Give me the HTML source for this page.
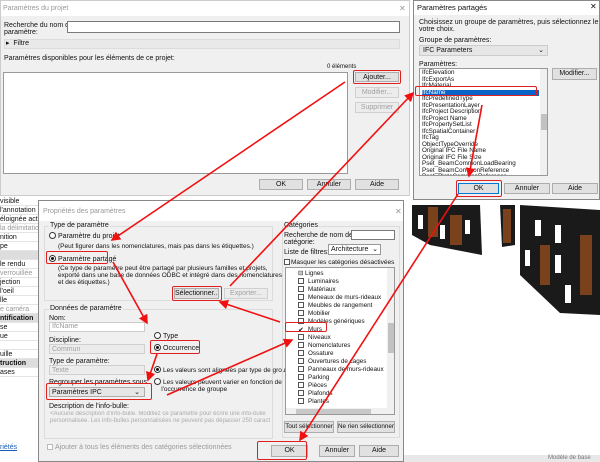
<!DOCTYPE html>
<html><head><meta charset="utf-8"><style>
*{margin:0;padding:0;box-sizing:border-box}
body{width:600px;height:462px;overflow:hidden;background:#fff;font-family:"Liberation Sans",sans-serif;font-size:7px;color:#111;position:relative}
.a{position:absolute;white-space:nowrap}
.dlg{position:absolute;background:#f0f0f0;border:1px solid #aaa;overflow:hidden}
.btn{position:absolute;background:#e1e1e1;border:1px solid #adadad;text-align:center;font-size:7px;line-height:10px;white-space:nowrap;overflow:hidden}
.dis{color:#a0a0a0;background:#ececec;border-color:#d0d0d0}
.in{position:absolute;background:#fff;border:1px solid #7a7a7a}
.red{position:absolute;border:1.5px solid #e02020;border-radius:2px}
.grp{position:absolute;border:1px solid #dcdcdc}
.rad{display:inline-block;width:7px;height:7px;border:1px solid #333;border-radius:50%;background:#fff;vertical-align:-1px;margin-right:2px;position:relative}
.rad.on::after{content:"";position:absolute;left:1px;top:1px;width:3px;height:3px;border-radius:50%;background:#111}
.cb{display:inline-block;width:6px;height:6px;border:1px solid #555;background:#fff;vertical-align:-1px;margin-right:4px}
.row{position:absolute;left:0;width:40px;height:9px;font-size:7px;line-height:9px;border-bottom:1px solid #e4e4e4;overflow:hidden;white-space:nowrap}
.li div{height:6.5px;line-height:6.5px;white-space:nowrap}
.cl div{height:8px;line-height:8px;white-space:nowrap}
</style></head><body>

<!-- building background -->
<svg class="a" style="left:400px;top:195px" width="200" height="130">
<g fill="#1a1a1a">
<polygon points="12,10 80,10 82,60 30,50 12,40"/>
<polygon points="100,10 115,10 115,50 102,52"/>
<polygon points="120,10 200,15 200,120 160,118 120,80"/>
</g>
<g fill="#8a4a1e" opacity=".85">
<rect x="28" y="12" width="10" height="30"/><rect x="50" y="20" width="12" height="30"/>
<rect x="103" y="14" width="8" height="34"/><rect x="140" y="50" width="10" height="40"/><rect x="180" y="40" width="12" height="60"/>
</g>
<g fill="#fff"><rect x="18" y="20" width="5" height="14"/><rect x="65" y="25" width="5" height="14"/><rect x="135" y="25" width="6" height="16"/><rect x="155" y="30" width="6" height="18"/><rect x="155" y="60" width="6" height="18"/><rect x="165" y="90" width="6" height="18"/><rect x="125" y="55" width="5" height="16"/><rect x="40" y="30" width="5" height="14"/></g>
</svg>
<div class="a" style="left:400px;top:455px;width:200px;height:7px;background:#e8e8e8"></div>
<div class="a" style="left:548px;top:455px;font-size:6px;color:#777">Modèle de base</div>

<!-- sidebar -->
<div class="a" style="left:0;top:195px;width:42px;height:267px;background:#fff"></div>
<div class="row" style="top:197px">visible</div>
<div class="row" style="top:206px">l'annotation</div>
<div class="row" style="top:215px">éloignée activ</div>
<div class="row" style="top:224px;color:#999">la délimitation</div>
<div class="row" style="top:233px">nition</div>
<div class="row" style="top:242px">pe</div>
<div class="row" style="top:251px;background:#ddd"></div>
<div class="row" style="top:260px">le rendu</div>
<div class="row" style="top:269px;color:#999">verrouillée</div>
<div class="row" style="top:278px">jection</div>
<div class="row" style="top:287px">l'oeil</div>
<div class="row" style="top:296px">lle</div>
<div class="row" style="top:305px;color:#999">e caméra</div>
<div class="row" style="top:314px;background:#ddd;font-weight:bold">ntification</div>
<div class="row" style="top:323px">se</div>
<div class="row" style="top:332px">ue</div>
<div class="row" style="top:341px"></div>
<div class="row" style="top:350px">uille</div>
<div class="row" style="top:359px;background:#ddd;font-weight:bold">truction</div>
<div class="row" style="top:368px">ases</div>
<div class="a" style="left:0;top:444px;color:#1a5fb4;text-decoration:underline">riétés</div>

<!-- dialog 1 -->
<div class="dlg" style="left:0;top:0;width:410px;height:196px;border-color:#ccc">
<div class="a" style="left:0;top:0;width:408px;height:15px;background:#fff"></div>
<div class="a" style="left:2px;top:4px;color:#999">Paramètres du projet</div>
<div class="a" style="left:398px;top:3px;color:#999;font-size:8px">✕</div>
<div class="a" style="left:3px;top:21px;line-height:7px">Recherche du nom du<br>paramètre:</div>
<div class="in" style="left:66px;top:20px;width:333px;height:12px"></div>
<div class="grp" style="left:3px;top:38px;width:396px;height:10px;background:#e9e9e9"></div>
<div class="a" style="left:5px;top:38px">▸ &nbsp;Filtre</div>
<div class="a" style="left:3px;top:54px">Paramètres disponibles pour les éléments de ce projet:</div>
<div class="a" style="left:326px;top:63px;font-size:6px">0 éléments</div>
<div class="in" style="left:2px;top:71px;width:345px;height:102px;border-color:#999"></div>
<div class="btn" style="left:354px;top:71px;width:44px;height:10px">Ajouter...</div>
<div class="red" style="left:352px;top:69px;width:48px;height:14px"></div>
<div class="btn dis" style="left:354px;top:86px;width:44px;height:11px">Modifier...</div>
<div class="btn dis" style="left:354px;top:101px;width:44px;height:11px">Supprimer</div>
<div class="btn" style="left:258px;top:178px;width:44px;height:11px">OK</div>
<div class="btn" style="left:306px;top:178px;width:44px;height:11px">Annuler</div>
<div class="btn" style="left:354px;top:178px;width:44px;height:11px">Aide</div>
</div>

<!-- dialog 2 -->
<div class="dlg" style="left:413px;top:0;width:187px;height:200px;background:#f0f0f0;border-color:#888">
<div class="a" style="left:0;top:0;width:186px;height:14px;background:#fff"></div>
<div class="a" style="left:3px;top:2px;font-size:7.5px">Paramètres partagés</div>
<div class="a" style="left:176px;top:1px;font-size:8px">✕</div>
<div class="a" style="left:5px;top:18px;line-height:7px">Choisissez un groupe de paramètres, puis sélectionnez le paramètre de<br>votre choix.</div>
<div class="a" style="left:5px;top:36px">Groupe de paramètres:</div>
<div class="btn" style="left:5px;top:44px;width:129px;height:11px;text-align:left;padding-left:3px;background:#e6e6e6;border-color:#ccc">IFC Parameters<span style="position:absolute;right:3px">⌄</span></div>
<div class="a" style="left:5px;top:60px">Paramètres:</div>
<div class="in li" style="left:5px;top:67px;width:129px;height:108px;border-color:#999;overflow:hidden;font-size:6.3px;padding:1px 0 0 2px">
<div>IfcElevation</div><div>IfcExportAs</div><div>IfcMaterial</div><div style="background:#0a64c8;color:#fff;width:117px">IfcName</div><div>IfcPredefinedType</div><div>IfcPresentationLayer</div><div>IfcProject Description</div><div>IfcProject Name</div><div>IfcPropertySetList</div><div>IfcSpatialContainer</div><div>IfcTag</div><div>ObjectTypeOverride</div><div>Original IFC File Name</div><div>Original IFC File Size</div><div>Pset_BeamCommonLoadBearing</div><div>Pset_BeamCommonReference</div><div>Pset_PlateCommonReference</div>
<div class="a" style="left:120px;top:0;width:8px;height:106px;background:#f0f0f0"></div>
<div class="a" style="left:121px;top:45px;width:6px;height:16px;background:#c2c2c2"></div>
</div>
<div class="red" style="left:1px;top:85px;width:122px;height:10px"></div>
<div class="btn" style="left:138px;top:67px;width:45px;height:12px">Modifier...</div>
<div class="btn" style="left:44px;top:182px;width:41px;height:11px;border-color:#0078d7">OK</div>
<div class="red" style="left:42px;top:179px;width:46px;height:17px"></div>
<div class="btn" style="left:90px;top:182px;width:46px;height:11px">Annuler</div>
<div class="btn" style="left:138px;top:182px;width:46px;height:11px">Aide</div>
</div>

<!-- dialog 3 -->
<div class="dlg" style="left:38px;top:200px;width:366px;height:262px;border-color:#888">
<div class="a" style="left:0;top:0;width:365px;height:20px;background:#fff"></div>
<div class="a" style="left:4px;top:7px;color:#999;font-size:7px">Propriétés des paramètres</div>
<div class="a" style="left:356px;top:6px;color:#999;font-size:8px">✕</div>
<div class="grp" style="left:5px;top:25px;width:229px;height:75px"></div>
<div class="a" style="left:10px;top:21px;background:#f0f0f0;padding:0 1px">Type de paramètre</div>
<div class="a" style="left:10px;top:31px"><span class="rad"></span>Paramètre du projet</div>
<div class="a" style="left:19px;top:42px;font-size:6.5px">(Peut figurer dans les nomenclatures, mais pas dans les étiquettes.)</div>
<div class="a" style="left:10px;top:54px"><span class="rad on"></span>Paramètre partagé</div>
<div class="red" style="left:7px;top:50px;width:62px;height:13px"></div>
<div class="a" style="left:19px;top:64px;line-height:7px;font-size:6.5px">(Ce type de paramètre peut être partagé par plusieurs familles et projets,<br>exporté dans une base de données ODBC et intégré dans des nomenclatures<br>et des étiquettes.)</div>
<div class="btn" style="left:135px;top:87px;width:45px;height:11px">Sélectionner...</div>
<div class="red" style="left:133px;top:85px;width:50px;height:15px"></div>
<div class="btn dis" style="left:185px;top:87px;width:44px;height:11px">Exporter...</div>

<div class="grp" style="left:5px;top:108px;width:229px;height:130px"></div>
<div class="a" style="left:10px;top:104px;background:#f0f0f0;padding:0 1px">Données de paramètre</div>
<div class="a" style="left:10px;top:114px">Nom:</div>
<div class="in" style="left:10px;top:121px;width:96px;height:10px;border-color:#ccc;color:#999;padding-left:2px;line-height:8px">IfcName</div>
<div class="a" style="left:10px;top:136px">Discipline:</div>
<div class="btn dis" style="left:10px;top:143px;width:96px;height:10px;text-align:left;padding-left:2px">Commun</div>
<div class="a" style="left:10px;top:157px">Type de paramètre:</div>
<div class="btn dis" style="left:10px;top:164px;width:96px;height:10px;text-align:left;padding-left:2px">Texte</div>
<div class="a" style="left:10px;top:178px">Regrouper les paramètres sous:</div>
<div class="btn" style="left:10px;top:186px;width:96px;height:10px;text-align:left;padding-left:2px;background:#e6e6e6">Paramètres IPC<span style="position:absolute;right:4px">⌄</span></div>
<div class="red" style="left:7px;top:182px;width:106px;height:17px"></div>
<div class="a" style="left:10px;top:202px">Description de l'info-bulle:</div>
<div class="a" style="left:11px;top:210px;color:#aaa;line-height:7px;font-size:6px;width:220px;overflow:hidden">&lt;Aucune description d'info-bulle. Modifiez ce paramètre pour écrire une info-bulle<br>personnalisée. Les info-bulles personnalisées ne peuvent pas dépasser 250 caractères.&gt;</div>
<div class="a" style="left:115px;top:131px"><span class="rad"></span>Type</div>
<div class="a" style="left:115px;top:143px"><span class="rad on"></span>Occurrence</div>
<div class="red" style="left:111px;top:139px;width:50px;height:14px"></div>
<div class="a" style="left:115px;top:165px;font-size:6.5px"><span class="rad on"></span>Les valeurs sont alignées par type de groupe</div>
<div class="a" style="left:115px;top:177px;line-height:7px;font-size:6.5px"><span class="rad"></span>Les valeurs peuvent varier en fonction de<br>&nbsp;&nbsp;&nbsp;&nbsp;l'occurrence de groupe</div>

<div class="grp" style="left:243px;top:25px;width:118px;height:212px"></div>
<div class="a" style="left:245px;top:21px;background:#f0f0f0">Catégories</div>
<div class="a" style="left:245px;top:31px;line-height:7px">Recherche de nom de<br>catégorie:</div>
<div class="in" style="left:312px;top:29px;width:44px;height:10px"></div>
<div class="a" style="left:245px;top:48px">Liste de filtres:</div>
<div class="btn" style="left:289px;top:43px;width:53px;height:11px;text-align:left;padding-left:2px;background:#fff;border-color:#999">Architecture<span style="position:absolute;right:2px">⌄</span></div>
<div class="a" style="left:245px;top:58px;font-size:6.5px"><span class="cb" style="margin-right:1px"></span>Masquer les catégories désactivées</div>
<div class="in cl" style="left:246px;top:66px;width:110px;height:148px;border-color:#999;overflow:hidden;font-size:6.3px;padding:2px 0 0 12px">
<div>⊟ Lignes</div><div><span class="cb"></span>Luminaires</div><div><span class="cb"></span>Matériaux</div><div><span class="cb"></span>Meneaux de murs-rideaux</div><div><span class="cb"></span>Meubles de rangement</div><div><span class="cb"></span>Mobilier</div><div><span class="cb"></span>Modèles génériques</div><div><span class="cb" style="border:none;font-size:7px;width:6px">✔</span>Murs</div><div><span class="cb"></span>Niveaux</div><div><span class="cb"></span>Nomenclatures</div><div><span class="cb"></span>Ossature</div><div><span class="cb"></span>Ouvertures de cages</div><div><span class="cb"></span>Panneaux de murs-rideaux</div><div><span class="cb"></span>Parking</div><div><span class="cb"></span>Pièces</div><div><span class="cb"></span>Plafonds</div><div><span class="cb"></span>Plantes</div>
<div class="a" style="left:101px;top:0;width:8px;height:140px;background:#f0f0f0"></div>
<div class="a" style="left:102px;top:55px;width:6px;height:30px;background:#c2c2c2"></div>
<div class="a" style="left:0;top:140px;width:109px;height:7px;background:#f0f0f0"></div>
<div class="a" style="left:10px;top:141px;width:75px;height:5px;background:#c8c8c8"></div>
</div>
<div class="red" style="left:246px;top:121px;width:42px;height:10px"></div>
<div class="btn" style="left:245px;top:220px;width:50px;height:12px;font-size:6.3px">Tout sélectionner</div>
<div class="btn" style="left:298px;top:220px;width:58px;height:12px;font-size:6.3px">Ne rien sélectionner</div>
<div class="a" style="left:8px;top:243px;color:#999"><span class="cb" style="border-color:#bbb;margin-right:2px"></span>Ajouter à tous les éléments des catégories sélectionnées</div>
<div class="btn" style="left:232px;top:244px;width:37px;height:12px">OK</div>
<div class="red" style="left:218px;top:240px;width:50px;height:19px"></div>
<div class="btn" style="left:280px;top:244px;width:36px;height:12px">Annuler</div>
<div class="btn" style="left:320px;top:244px;width:40px;height:12px">Aide</div>
</div>

<!-- arrows -->
<svg class="a" style="left:0;top:0" width="600" height="462">
<defs><marker id="h" markerWidth="6" markerHeight="6" refX="5" refY="3" orient="auto"><path d="M0,0 L6,3 L0,6 z" fill="#f01010"/></marker></defs>
<g stroke="#f01010" stroke-width="1.6" fill="none" marker-end="url(#h)">
<line x1="345" y1="82" x2="112" y2="240"/>
<line x1="230" y1="286" x2="413" y2="93"/>
<line x1="482" y1="105" x2="469" y2="176"/>
<line x1="458" y1="194" x2="300" y2="440"/>
<line x1="113" y1="262" x2="147" y2="323"/>
<line x1="157" y1="354" x2="148" y2="380"/>
<line x1="280" y1="322" x2="220" y2="302"/>
<line x1="167" y1="395" x2="292" y2="340"/>
</g>
</svg>
</body></html>
